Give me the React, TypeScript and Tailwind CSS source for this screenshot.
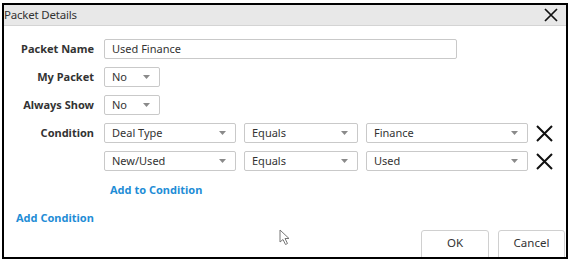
import React from "react";

const font = { fontFamily: '"Noto Sans", "Open Sans", Arial, sans-serif' };

function Caret() {
  return (
    <svg width="7" height="4" viewBox="0 0 7 4" className="shrink-0">
      <path d="M0 0 L7 0 L3.5 4 Z" fill="#8a8a8a" />
    </svg>
  );
}

function Select({ value, w }: { value: string; w: string }) {
  return (
    <div
      className={`${w} h-[20px] border border-[#c9c9c9] rounded-[2px] bg-white flex items-center justify-between pl-[7px] pr-[9px] text-[11px] text-[#333]`}
    >
      <span>{value}</span>
      <Caret />
    </div>
  );
}

function BigX() {
  return (
    <svg width="17" height="17" viewBox="0 0 17 17" className="shrink-0">
      <path d="M1 1 L16 16 M16 1 L1 16" stroke="#111" strokeWidth="2" />
    </svg>
  );
}

function Row({ label, children }: { label: string; children: React.ReactNode }) {
  return (
    <div className="flex items-center h-[20px]">
      <div className="w-[90px] text-right font-bold text-[11px] text-[#333]">{label}</div>
      <div className="ml-[10px] flex items-center">{children}</div>
    </div>
  );
}

export default function App() {
  return (
    <div className="w-[571px] h-[265px] bg-white relative overflow-hidden" style={font}>
      <div className="ml-[2px] mt-[3px] w-[566px] h-[256px] border-2 border-black flex flex-col overflow-hidden">
        <div className="h-[21px] shrink-0 bg-[#e8e8e8] border-b border-[#d4d4d4] flex items-center justify-between pr-[8px]">
          <span className="text-[11.5px] text-[#333] tracking-[-0.2px]">Packet Details</span>
          <svg width="14" height="14" viewBox="0 0 14 14">
            <path d="M1 1 L13 13 M13 1 L1 13" stroke="#111" strokeWidth="1.7" />
          </svg>
        </div>
        <div className="flex flex-col pt-[13px] gap-[8px] shrink-0">
          <Row label="Packet Name">
            <div className="w-[353px] h-[20px] border border-[#c9c9c9] rounded-[2px] flex items-center pl-[7px] text-[11px] text-[#333]">
              Used Finance
            </div>
          </Row>
          <Row label="My Packet">
            <Select value="No" w="w-[56px]" />
          </Row>
          <Row label="Always Show">
            <Select value="No" w="w-[56px]" />
          </Row>
          <Row label="Condition">
            <div className="flex items-center gap-[8px]">
              <Select value="Deal Type" w="w-[132px]" />
              <Select value="Equals" w="w-[114px]" />
              <Select value="Finance" w="w-[162px]" />
              <BigX />
            </div>
          </Row>
          <Row label="">
            <div className="flex items-center gap-[8px]">
              <Select value="New/Used" w="w-[132px]" />
              <Select value="Equals" w="w-[114px]" />
              <Select value="Used" w="w-[162px]" />
              <BigX />
            </div>
          </Row>
        </div>
        <div className="mt-[9px] h-[20px] shrink-0 flex items-center pl-[106px] text-[11px] font-bold text-[#1f8dd6]">
          Add to Condition
        </div>
        <div className="mt-[8px] h-[20px] shrink-0 flex items-center pl-[12px] text-[11px] font-bold text-[#1f8dd6]">
          Add Condition
        </div>
        <div className="mt-[2px] shrink-0 flex justify-end gap-[9px] pr-[1px]">
          <div className="w-[68px] h-[30px] border border-[#d0d0d0] rounded-[3px] flex items-center justify-center text-[11.5px] text-[#333] pb-[4px]">
            OK
          </div>
          <div className="w-[67px] h-[30px] border border-[#d0d0d0] rounded-[3px] flex items-center justify-center text-[11.5px] text-[#333] pb-[4px]">
            Cancel
          </div>
        </div>
      </div>
      <svg className="absolute left-[279px] top-[229px]" width="12" height="17" viewBox="0 0 12 17">
        <path d="M1 1 L1 13 L4 10.5 L6.5 15.5 L8.5 14.5 L6 9.5 L10 9.5 Z" fill="#fff" stroke="#777" strokeWidth="1" strokeLinejoin="round" />
      </svg>
    </div>
  );
}
